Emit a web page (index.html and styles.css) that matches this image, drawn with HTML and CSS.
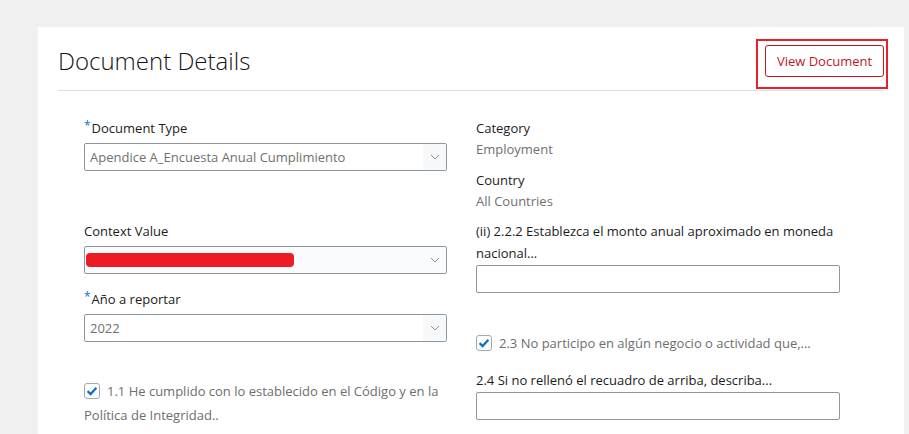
FILE: index.html
```html
<!DOCTYPE html>
<html lang="es">
<head>
    <meta charset="UTF-8">
    <meta name="viewport" content="width=device-width, initial-scale=1.0">
    <title>Document Details</title>
    <link rel="stylesheet" href="styles.css">
</head>
<body>
<div class="card">
    <div class="card-head">
        <h1>Document Details</h1>
        <div class="btn-wrap">
            <button class="btn-view">View Document</button>
            <span class="highlight"></span>
        </div>
    </div>

    <div class="form">
        <div class="col">
            <div class="field">
                <label><span class="req">*</span>Document Type</label>
                <div class="select">
                    <span class="select-text">Apendice A_Encuesta Anual Cumplimiento</span>
                    <span class="chev"><svg width="10" height="6" viewBox="0 0 10 6"><path d="M1 1l4 4 4-4" fill="none" stroke="#8c949b" stroke-width="1"/></svg></span>
                </div>
            </div>
            <div class="field field-context">
                <label>Context Value</label>
                <div class="select select-ro">
                    <span class="select-text"><span class="redact"></span></span>
                    <span class="chev"><svg width="10" height="6" viewBox="0 0 10 6"><path d="M1 1l4 4 4-4" fill="none" stroke="#8c949b" stroke-width="1"/></svg></span>
                </div>
            </div>
            <div class="field field-year">
                <label><span class="req">*</span>Año a reportar</label>
                <div class="select">
                    <span class="select-text">2022</span>
                    <span class="chev"><svg width="10" height="6" viewBox="0 0 10 6"><path d="M1 1l4 4 4-4" fill="none" stroke="#8c949b" stroke-width="1"/></svg></span>
                </div>
            </div>
            <div class="check check-left">
                <svg class="box" width="16" height="16" viewBox="0 0 16 16"><rect x="0.5" y="0.5" width="15" height="15" rx="2.5" fill="#fff" stroke="#a3abb2"/><path d="M3.6 8.1l3 3 5.8-6.4" fill="none" stroke="#0b6fc4" stroke-width="2.2"/></svg>1.1 He cumplido con lo establecido en el Código y en la Política de Integridad..
            </div>
        </div>

        <div class="col">
            <div class="info">
                <div class="info-label">Category</div>
                <div class="info-value">Employment</div>
            </div>
            <div class="info">
                <div class="info-label">Country</div>
                <div class="info-value">All Countries</div>
            </div>
            <div class="field field-amount">
                <label>(ii) 2.2.2 Establezca el monto anual aproximado en moneda nacional...</label>
                <div class="input"></div>
            </div>
            <div class="check check-right">
                <svg class="box" width="16" height="16" viewBox="0 0 16 16"><rect x="0.5" y="0.5" width="15" height="15" rx="2.5" fill="#fff" stroke="#a3abb2"/><path d="M3.6 8.1l3 3 5.8-6.4" fill="none" stroke="#0b6fc4" stroke-width="2.2"/></svg>2.3 No participo en algún negocio o actividad que,...
            </div>
            <div class="field field-desc">
                <label>2.4 Si no rellenó el recuadro de arriba, describa...</label>
                <div class="input"></div>
            </div>
        </div>
    </div>
</div>
</body>
</html>
```

FILE: styles.css
```css
* {
    box-sizing: border-box;
}
body {
    margin: 0;
    background: #f0f0f0;
    font-family: "Open Sans", "Noto Sans", sans-serif;
    color: #1c1c1c;
    overflow: hidden;
}
.card {
    background: #fff;
    margin: 27px 5px 0 38px;
    height: 420px;
}
.card-head {
    margin: 0 20px;
    padding: 18px 0 13px;
    display: flex;
    justify-content: space-between;
    align-items: center;
    border-bottom: 1px solid #d6e0e8;
}
.card-head h1 {
    margin: 0;
    font-size: 24px;
    font-weight: 300;
    color: #161513;
    line-height: 32px;
}
.btn-wrap {
    position: relative;
}
.btn-view {
    width: 119px;
    height: 32px;
    background: #fff;
    border: 1px solid #c0161f;
    border-radius: 3px;
    color: #c0161f;
    font-family: inherit;
    font-size: 13px;
    padding: 0;
}
.highlight {
    position: absolute;
    left: -9px;
    top: -6px;
    width: 132px;
    height: 50px;
    border: 2px solid #e8202a;
}

.form {
    display: grid;
    grid-template-columns: 363px 364px;
    column-gap: 29px;
    padding: 27px 0 0 46px;
}
.col {
    display: flex;
    flex-direction: column;
}
.field label {
    display: block;
    font-size: 13px;
    line-height: 20px;
    margin-bottom: 5px;
}
.req {
    color: #0a72c9;
    font-size: 12px;
    line-height: 0;
    vertical-align: 3px;
    margin-right: 1px;
}
.select {
    display: flex;
    height: 28px;
    border: 1px solid #8d979f;
    border-radius: 2px;
    background: #fff;
}
.select-ro {
    background: #f9fbfd;
}
.select-text {
    flex: 1;
    padding-left: 5px;
    font-size: 13px;
    line-height: 26px;
    color: #707070;
    display: flex;
    align-items: center;
}
.chev {
    width: 23px;
    display: flex;
    align-items: center;
    justify-content: center;
    background: #f6f8fa;
}
.select-ro .chev {
    background: transparent;
}
.redact {
    display: block;
    width: 208px;
    height: 14px;
    margin-left: -4px;
    background: #ed1c24;
    border-radius: 4px;
}
.field-context {
    margin-top: 50px;
}
.field-year {
    margin-top: 15px;
}
.check {
    font-size: 13px;
    line-height: 24px;
    color: #6e6e6e;
}
.check .box {
    vertical-align: -3px;
    margin-right: 7px;
}
.check-left {
    margin-top: 37px;
}

.info {
    margin-bottom: 10px;
}
.info-label {
    font-size: 13px;
    line-height: 21px;
}
.info-value {
    font-size: 13px;
    line-height: 21px;
    color: #707070;
}
.field-amount {
    margin-top: -2px;
}
.field-amount label {
    line-height: 22px;
    margin-bottom: 1px;
}
.input {
    height: 28px;
    border: 1px solid #8d979f;
    border-radius: 2px;
}
.check-right {
    margin-top: 38px;
}
.field-desc {
    margin-top: 15px;
}
.field-desc label {
    margin-bottom: 2px;
}
```
